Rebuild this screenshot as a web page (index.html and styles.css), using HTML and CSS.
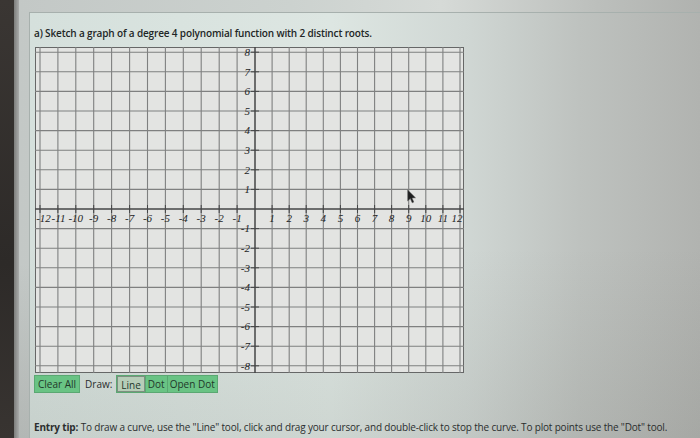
FILE: index.html
```html
<!DOCTYPE html>
<html>
<head>
<meta charset="utf-8">
<link rel="stylesheet" href="styles.css">
</head>
<body>
<div class="screen">
  <div class="bezel"></div>
  <div class="edge"></div>
  <div class="desk">
    <div class="panel">
      <p class="question">a) Sketch a graph of a degree 4 polynomial function with 2 distinct roots.</p>
      <svg class="graph" width="429" height="326" viewBox="0 0 429 326">
        <rect class="bg" x="0.5" y="0.5" width="428" height="325"/>
        <path class="grid" d="M5 0V326M22.9 0V326M40.8 0V326M58.7 0V326M76.6 0V326M94.6 0V326M112.5 0V326M130.4 0V326M148.3 0V326M166.2 0V326M184.2 0V326M202.1 0V326M237.1 0V326M254.2 0V326M271.2 0V326M288.3 0V326M305.4 0V326M322.5 0V326M339.6 0V326M356.6 0V326M373.7 0V326M390.8 0V326M407.9 0V326M425 0V326M0 5.2H429M0 24.8H429M0 44.4H429M0 64H429M0 83.6H429M0 103.2H429M0 122.8H429M0 142.4H429M0 181.6H429M0 201.2H429M0 220.8H429M0 240.4H429M0 260H429M0 279.6H429M0 299.2H429M0 318.8H429"/>
        <path class="axis" d="M220 0V326M0 162H429"/>
        <path class="tick" d="M216 5.2H224M216 24.8H224M216 44.4H224M216 64H224M216 83.6H224M216 103.2H224M216 122.8H224M216 142.4H224M216 181.6H224M216 201.2H224M216 220.8H224M216 240.4H224M216 260H224M216 279.6H224M216 299.2H224M216 318.8H224M5 158V166M22.9 158V166M40.8 158V166M58.7 158V166M76.6 158V166M94.6 158V166M112.5 158V166M130.4 158V166M148.3 158V166M166.2 158V166M184.2 158V166M202.1 158V166M237.1 158V166M254.2 158V166M271.2 158V166M288.3 158V166M305.4 158V166M322.5 158V166M339.6 158V166M356.6 158V166M373.7 158V166M390.8 158V166M407.9 158V166M425 158V166"/>
        <g class="ylab">
          <text x="215" y="9">8</text>
          <text x="215" y="28.6">7</text>
          <text x="215" y="48.2">6</text>
          <text x="215" y="67.8">5</text>
          <text x="215" y="87.4">4</text>
          <text x="215" y="107">3</text>
          <text x="215" y="126.6">2</text>
          <text x="215" y="146.2">1</text>
          <text x="215" y="185.4">-1</text>
          <text x="215" y="205">-2</text>
          <text x="215" y="224.6">-3</text>
          <text x="215" y="244.2">-4</text>
          <text x="215" y="263.8">-5</text>
          <text x="215" y="283.4">-6</text>
          <text x="215" y="303">-7</text>
          <text x="215" y="322.6">-8</text>
        </g>
        <g class="xlab">
          <text x="8.5" y="174.5">-12</text>
          <text x="23.5" y="174.5">-11</text>
          <text x="40.8" y="174.5">-10</text>
          <text x="58.7" y="174.5">-9</text>
          <text x="76.6" y="174.5">-8</text>
          <text x="94.6" y="174.5">-7</text>
          <text x="112.5" y="174.5">-6</text>
          <text x="130.4" y="174.5">-5</text>
          <text x="148.3" y="174.5">-4</text>
          <text x="166.2" y="174.5">-3</text>
          <text x="184.2" y="174.5">-2</text>
          <text x="202.1" y="174.5">-1</text>
          <text x="237.1" y="174.5">1</text>
          <text x="254.2" y="174.5">2</text>
          <text x="271.2" y="174.5">3</text>
          <text x="288.3" y="174.5">4</text>
          <text x="305.4" y="174.5">5</text>
          <text x="322.5" y="174.5">6</text>
          <text x="339.6" y="174.5">7</text>
          <text x="356.6" y="174.5">8</text>
          <text x="373.7" y="174.5">9</text>
          <text x="390.8" y="174.5">10</text>
          <text x="407.9" y="174.5">11</text>
          <text x="422" y="174.5">12</text>
        </g>
        <path class="cursor" d="M372.7 143L372.7 154L375.3 151.6L377.2 155.8L378.8 155.1L377 151L380.5 150.8Z"/>
      </svg>
      <div class="toolbar">
        <button class="btn">Clear All</button>
        <span class="label">Draw:</span>
        <div class="group">
          <button class="btn seg active">Line</button>
          <button class="btn seg">Dot</button>
          <button class="btn seg">Open Dot</button>
        </div>
      </div>
      <p class="tip"><b>Entry tip:</b> To draw a curve, use the "Line" tool, click and drag your cursor, and double-click to stop the curve. To plot points use the "Dot" tool.</p>
    </div>
  </div>
</div>
</body>
</html>
```
FILE: styles.css
```css
html, body {
  margin: 0;
  padding: 0;
}
body {
  width: 700px;
  height: 438px;
  overflow: hidden;
  font-family: "Open Sans", "Liberation Sans", sans-serif;
}
.screen {
  display: flex;
  height: 438px;
}
.bezel {
  width: 14px;
  background: linear-gradient(180deg, #3a3633 0%, #2d2a28 60%, #383431 100%);
}
.edge {
  width: 5px;
  background: linear-gradient(90deg, #7d7e7c, #a9abaa);
}
.desk {
  flex: 1;
  padding-top: 12px;
  background:
    linear-gradient(180deg, rgba(0,0,0,0) 60%, rgba(60,60,55,0.12) 100%),
    linear-gradient(90deg, #c3c8c6 0%, #ccd2cf 40%, #d6dad7 62%, #bcbfbc 85%, #b0b2af 100%);
}
.panel {
  height: 100%;
  margin-left: 10px;
  border-top: 1px solid #a7b0ad;
  border-left: 1px solid #a7b0ad;
  background:
    linear-gradient(180deg, rgba(0,0,0,0) 55%, rgba(70,70,60,0.10) 100%),
    linear-gradient(90deg, #d5e0dc 0%, #dde6e2 45%, #d0d7d4 65%, #bec2bf 82%, #b1b3b0 100%);
  padding-left: 4px;
  box-sizing: border-box;
}
.question {
  margin: 0;
  padding-top: 13px;
  height: 21px;
  font-size: 10px;
  font-weight: 600;
  color: #222626;
  letter-spacing: -0.15px;
}
.graph {
  display: block;
  margin-left: 1px;
}
.bg {
  fill: #e3e4e2;
  stroke: #666767;
  stroke-width: 1;
}
.grid {
  stroke: #7f8080;
  stroke-width: 1.1;
  fill: none;
}
.axis {
  stroke: #454647;
  stroke-width: 1.5;
  fill: none;
}
.tick {
  stroke: #454647;
  stroke-width: 1;
  fill: none;
}
.ylab text, .xlab text {
  font-family: "Liberation Serif", serif;
  font-style: italic;
  font-size: 11px;
  fill: #222324;
}
.ylab text {
  text-anchor: end;
}
.xlab text {
  text-anchor: middle;
}
.cursor {
  fill: #1e1f20;
  stroke: #555;
  stroke-width: 0.5;
}
.toolbar {
  display: flex;
  align-items: center;
  gap: 4px;
  margin-top: 2px;
  height: 18px;
}
.btn {
  font-family: "Open Sans", "Liberation Sans", sans-serif;
  font-size: 10px;
  color: #22382a;
  background: #69c384;
  border: 1px solid #5aa872;
  height: 18px;
  padding: 0 3px;
  margin: 0;
  line-height: 16px;
}
.label {
  font-size: 10px;
  color: #2a2d2d;
  margin-left: 1px;
}
.group {
  display: flex;
  border: 1px solid #5aa872;
  background: #69c384;
}
.seg {
  border: none;
  border-left: 1px solid #5aa872;
  height: 16px;
  padding: 0 2px;
}
.seg:first-child {
  border-left: none;
}
.seg.active {
  background: #b7cdb8;
  border: 1px solid #7d8f80;
  height: 16px;
  padding: 0 3px;
}
.tip {
  margin: 0;
  padding-top: 27px;
  font-size: 10px;
  color: #2b2e2e;
  white-space: nowrap;
  letter-spacing: -0.17px;
}
.tip b {
  font-weight: 700;
}
```
